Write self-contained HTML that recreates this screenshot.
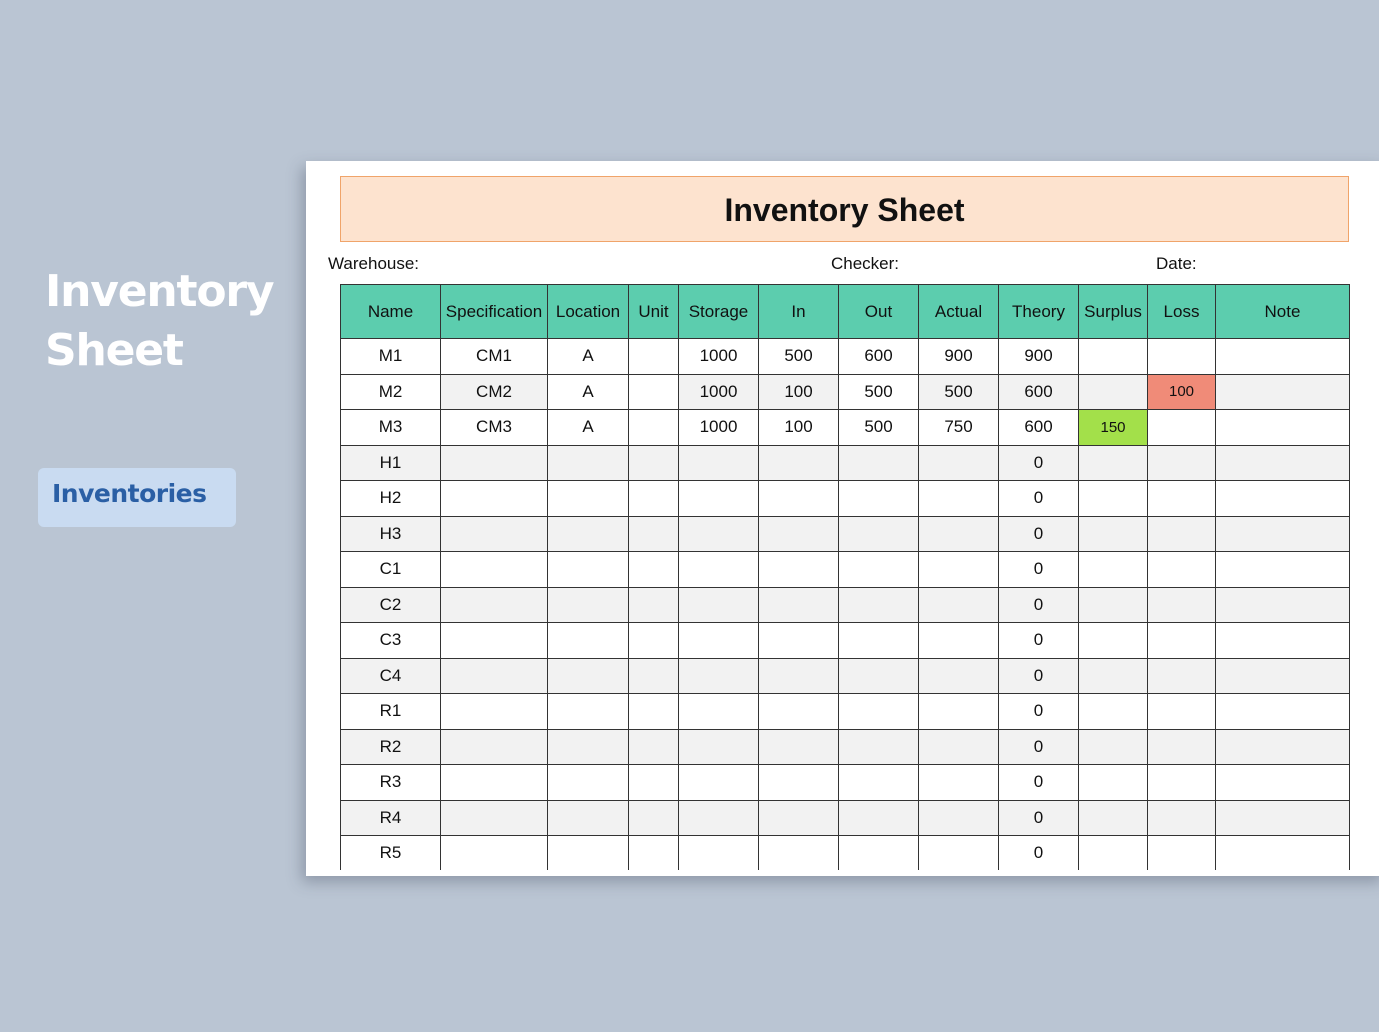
<!DOCTYPE html>
<html><head><meta charset="utf-8">
<style>
*{margin:0;padding:0;box-sizing:border-box}
body{width:1379px;height:1032px;background:#bac5d3;position:relative;overflow:hidden;font-family:"Liberation Sans",sans-serif}
.lt{position:absolute;left:45px;top:262px;color:#fff;font-weight:bold;font-size:44px;line-height:59px;font-family:"DejaVu Sans","Liberation Sans",sans-serif;letter-spacing:-1.2px}
.btn{position:absolute;left:38px;top:468px;width:198px;height:59px;background:#c9dbf1;border-radius:6px;color:#2a5fa5;font-weight:bold;font-size:25px;line-height:52px;padding-left:14px;font-family:"DejaVu Sans","Liberation Sans",sans-serif;letter-spacing:-0.5px}
.card{position:absolute;left:306px;top:161px;width:1080px;height:715px;background:#fff;box-shadow:-4px 6px 14px rgba(60,70,90,.35)}
.title{position:absolute;left:340px;top:176px;width:1009px;height:66px;background:#fde3cf;border:1.5px solid #f0a46a;text-align:center;font-weight:bold;font-size:32px;line-height:66px;color:#111}
.lbl{position:absolute;top:254px;font-size:17px;color:#111}
.wrap{position:absolute;left:340px;top:284px;width:1010px;height:586px;overflow:hidden}
table{border-collapse:collapse;table-layout:fixed;width:1009px}
td{border:1.3px solid #333;text-align:center;font-size:17px;color:#111;height:35.5px;padding:0;white-space:nowrap;overflow:hidden}
tr.h td{background:#5ccdae;height:54px;border-color:#333}
tr.s td{background:#f2f2f2}
td.w{background:#fff!important}
.r{background:#f08b78!important;font-size:15px}
.g{background:#a3e04a!important;font-size:15px}
</style></head><body>
<div class="lt">Inventory<br>Sheet</div>
<div class="btn">Inventories</div>
<div class="card"></div>
<div class="title">Inventory Sheet</div>
<div class="lbl" style="left:328px">Warehouse:</div>
<div class="lbl" style="left:831px">Checker:</div>
<div class="lbl" style="left:1156px">Date:</div>
<div class="wrap"><table>
<colgroup><col style="width:100px"><col style="width:107px"><col style="width:81px"><col style="width:50px"><col style="width:80px"><col style="width:80px"><col style="width:80px"><col style="width:80px"><col style="width:80px"><col style="width:69px"><col style="width:68px"><col style="width:134px"></colgroup>
<tr class="h"><td>Name</td><td>Specification</td><td>Location</td><td>Unit</td><td>Storage</td><td>In</td><td>Out</td><td>Actual</td><td>Theory</td><td>Surplus</td><td>Loss</td><td>Note</td></tr>
<tr><td>M1</td><td>CM1</td><td>A</td><td></td><td>1000</td><td>500</td><td>600</td><td>900</td><td>900</td><td></td><td></td><td></td></tr>
<tr class="s"><td class="w">M2</td><td>CM2</td><td class="w">A</td><td class="w"></td><td>1000</td><td>100</td><td class="w">500</td><td>500</td><td>600</td><td></td><td class="r">100</td><td></td></tr>
<tr><td>M3</td><td>CM3</td><td>A</td><td></td><td>1000</td><td>100</td><td>500</td><td>750</td><td>600</td><td class="g">150</td><td></td><td></td></tr>
<tr class="s"><td>H1</td><td></td><td></td><td></td><td></td><td></td><td></td><td></td><td>0</td><td></td><td></td><td></td></tr>
<tr><td>H2</td><td></td><td></td><td></td><td></td><td></td><td></td><td></td><td>0</td><td></td><td></td><td></td></tr>
<tr class="s"><td>H3</td><td></td><td></td><td></td><td></td><td></td><td></td><td></td><td>0</td><td></td><td></td><td></td></tr>
<tr><td>C1</td><td></td><td></td><td></td><td></td><td></td><td></td><td></td><td>0</td><td></td><td></td><td></td></tr>
<tr class="s"><td>C2</td><td></td><td></td><td></td><td></td><td></td><td></td><td></td><td>0</td><td></td><td></td><td></td></tr>
<tr><td>C3</td><td></td><td></td><td></td><td></td><td></td><td></td><td></td><td>0</td><td></td><td></td><td></td></tr>
<tr class="s"><td>C4</td><td></td><td></td><td></td><td></td><td></td><td></td><td></td><td>0</td><td></td><td></td><td></td></tr>
<tr><td>R1</td><td></td><td></td><td></td><td></td><td></td><td></td><td></td><td>0</td><td></td><td></td><td></td></tr>
<tr class="s"><td>R2</td><td></td><td></td><td></td><td></td><td></td><td></td><td></td><td>0</td><td></td><td></td><td></td></tr>
<tr><td>R3</td><td></td><td></td><td></td><td></td><td></td><td></td><td></td><td>0</td><td></td><td></td><td></td></tr>
<tr class="s"><td>R4</td><td></td><td></td><td></td><td></td><td></td><td></td><td></td><td>0</td><td></td><td></td><td></td></tr>
<tr><td>R5</td><td></td><td></td><td></td><td></td><td></td><td></td><td></td><td>0</td><td></td><td></td><td></td></tr>
<tr><td>&nbsp;</td><td></td><td></td><td></td><td></td><td></td><td></td><td></td><td></td><td></td><td></td><td></td></tr>
</table></div>
</body></html>
